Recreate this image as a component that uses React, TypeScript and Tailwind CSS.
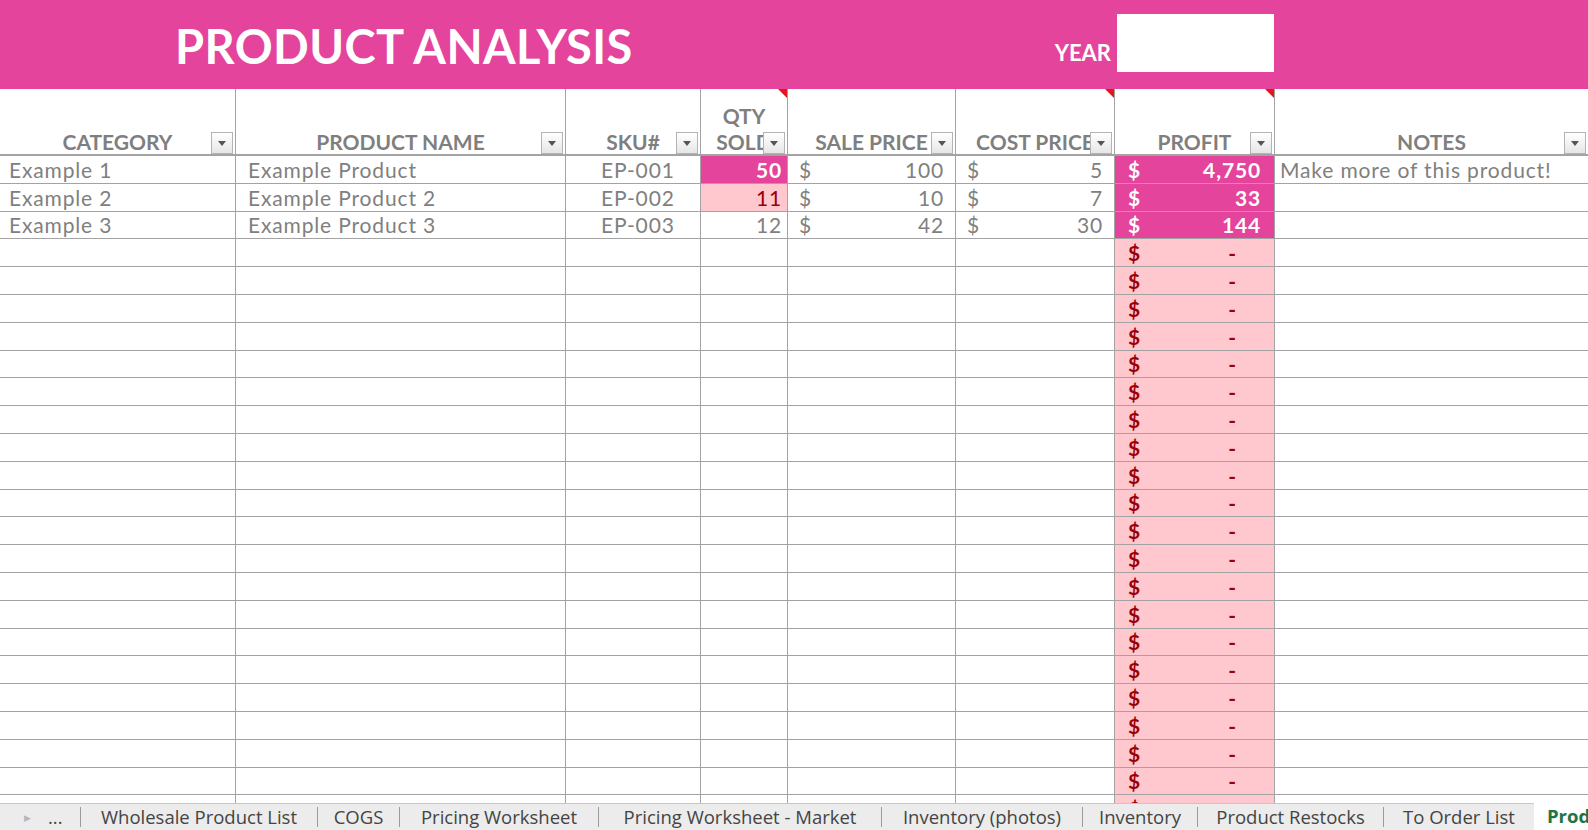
import React from "react";

const PINK = "bg-[#e4449b]";

interface Row {
  category: string;
  name: string;
  sku: string;
  qty: string;
  sale: string;
  cost: string;
  profit: string;
  qtyStyle?: "hot" | "warn";
  notes?: string;
}

const rows: Row[] = [
  { category: "Example 1", name: "Example Product", sku: "EP-001", qty: "50", sale: "100", cost: "5", profit: "4,750", qtyStyle: "hot", notes: "Make more of this product!" },
  { category: "Example 2", name: "Example Product 2", sku: "EP-002", qty: "11", sale: "10", cost: "7", profit: "33", qtyStyle: "warn" },
  { category: "Example 3", name: "Example Product 3", sku: "EP-003", qty: "12", sale: "42", cost: "30", profit: "144" },
];

const tabs = [
  { label: "Wholesale Product List", w: "w-[237px]" },
  { label: "COGS", w: "w-[82px]" },
  { label: "Pricing Worksheet", w: "w-[199px]" },
  { label: "Pricing Worksheet - Market", w: "w-[283px]" },
  { label: "Inventory (photos)", w: "w-[201px]" },
  { label: "Inventory", w: "w-[115px]" },
  { label: "Product Restocks", w: "w-[186px]" },
  { label: "To Order List", w: "w-[151px]" },
];

const cols = "grid grid-cols-[236px_330px_135px_87px_168px_159px_160px_313px]";
const cell = "border-r border-b border-[#a3a3a3] h-[27.8px] overflow-hidden";

const Dropdown = () => (
  <div className="absolute right-[2px] bottom-0 w-[22px] h-[22px] border border-[#b4b4b4] bg-gradient-to-b from-white to-[#e6e6e6] flex items-center justify-center">
    <div className="w-0 h-0 border-l-[4px] border-r-[4px] border-t-[5px] border-l-transparent border-r-transparent border-t-[#555]" />
  </div>
);

const RedCorner = () => (
  <div className="absolute top-0 right-0 w-0 h-0 border-t-[9px] border-l-[9px] border-t-[#e8141c] border-l-transparent" />
);

const HeadCell = ({
  label,
  sub,
  corner,
  last,
}: {
  label: string;
  sub?: string;
  corner?: boolean;
  last?: boolean;
}) => (
  <div
    className={`relative h-[67px] border-b-2 border-[#a3a3a3] ${last ? "" : "border-r"} flex flex-col items-center justify-end pb-0 overflow-hidden`}
  >
    {corner && <RedCorner />}
    {sub && (
      <span className="text-[21px] font-bold text-[#7f7f7f] leading-[28px]">{sub}</span>
    )}
    <span className="text-[21px] font-bold text-[#7f7f7f] leading-[24px] whitespace-nowrap">{label}</span>
    <Dropdown />
  </div>
);

const Money = ({ value, tone }: { value: string; tone: "plain" | "hot" | "warn" }) => {
  const bg = tone === "hot" ? PINK : tone === "warn" ? "bg-[#ffc7ce]" : "";
  const color =
    tone === "hot" ? "text-white font-bold" : tone === "warn" ? "text-[#9c0006] font-bold" : "text-[#808080]";
  const pad = tone === "plain" ? "pl-[11px] pr-[11px]" : "pl-[13px] pr-[13px]";
  return (
    <div className={`${cell} ${bg} ${color} ${pad} flex items-center justify-between`}>
      <span>$</span>
      <span className={tone === "warn" ? "pr-[24px]" : ""}>{value}</span>
    </div>
  );
};

export default function App() {
  const empty = Array.from({ length: 21 });

  return (
    <div className="w-[1588px] h-[830px] overflow-hidden bg-white flex flex-col font-['Lato','Open_Sans',sans-serif]">
      {/* title bar */}
      <div className={`${PINK} h-[89px] shrink-0 flex items-start`}>
        <h1 className="ml-[175px] mt-[22px] text-[47px] leading-[48px] font-bold text-white tracking-[0.4px]">
          PRODUCT ANALYSIS
        </h1>
        <div className="ml-auto mr-[314px] flex items-start">
          <span className="mt-[41px] text-[22px] leading-[24px] font-bold text-white">YEAR</span>
          <div className="ml-[6px] mt-[14px] w-[157px] h-[58px] bg-white" />
        </div>
      </div>

      {/* sheet */}
      <div className="flex-1 overflow-hidden">
        <div className={cols}>
          <HeadCell label="CATEGORY" />
          <HeadCell label="PRODUCT NAME" />
          <HeadCell label="SKU#" />
          <HeadCell label="SOLD" sub="QTY" corner />
          <HeadCell label="SALE PRICE" />
          <HeadCell label="COST PRICE" corner />
          <HeadCell label="PROFIT" corner />
          <HeadCell label="NOTES" last />
        </div>

        <div className={`${cols} text-[21px] tracking-[0.85px] text-[#808080] leading-none`}>
          {rows.map((r) => (
            <React.Fragment key={r.sku}>
              <div className={`${cell} pl-[9px] flex items-center whitespace-nowrap`}>{r.category}</div>
              <div className={`${cell} pl-[12px] flex items-center whitespace-nowrap`}>{r.name}</div>
              <div className={`${cell} pl-[35px] flex items-center`}>{r.sku}</div>
              <div
                className={`${cell} pr-[5px] flex items-center justify-end ${
                  r.qtyStyle === "hot"
                    ? `${PINK} text-white font-bold`
                    : r.qtyStyle === "warn"
                    ? "bg-[#ffc7ce] text-[#9c0006]"
                    : ""
                }`}
              >
                {r.qty}
              </div>
              <Money value={r.sale} tone="plain" />
              <Money value={r.cost} tone="plain" />
              <Money value={r.profit} tone="hot" />
              <div className="border-b border-[#a3a3a3] h-[27.8px] pl-[5px] flex items-center whitespace-nowrap overflow-hidden">
                {r.notes ?? ""}
              </div>
            </React.Fragment>
          ))}
          {empty.map((_, i) => (
            <React.Fragment key={i}>
              <div className={cell} />
              <div className={cell} />
              <div className={cell} />
              <div className={cell} />
              <div className={cell} />
              <div className={cell} />
              <Money value="-" tone="warn" />
              <div className="border-b border-[#a3a3a3] h-[27.8px]" />
            </React.Fragment>
          ))}
        </div>
      </div>

      {/* sheet tabs */}
      <div className="h-[27px] shrink-0 bg-[#ececec] border-t border-[#c6c6c6] flex items-stretch font-['Open_Sans',sans-serif] text-[18.5px] text-[#444] leading-none">
        <div className="w-[80px] flex items-center">
          <span className="ml-[24px] text-[9px] text-[#b8b8b8]">▶</span>
          <span className="ml-[17px]">...</span>
        </div>
        {tabs.map((t) => (
          <div key={t.label} className={`${t.w} shrink-0 flex items-center`}>
            <div className="w-px h-[20px] bg-[#9a9a9a]" />
            <span className="flex-1 text-center whitespace-nowrap">{t.label}</span>
          </div>
        ))}
        <div className="flex-1 bg-white -mt-px pl-[13px] flex items-center font-bold text-[#217346] whitespace-nowrap overflow-hidden">
          Product Analysis
        </div>
      </div>
    </div>
  );
}
